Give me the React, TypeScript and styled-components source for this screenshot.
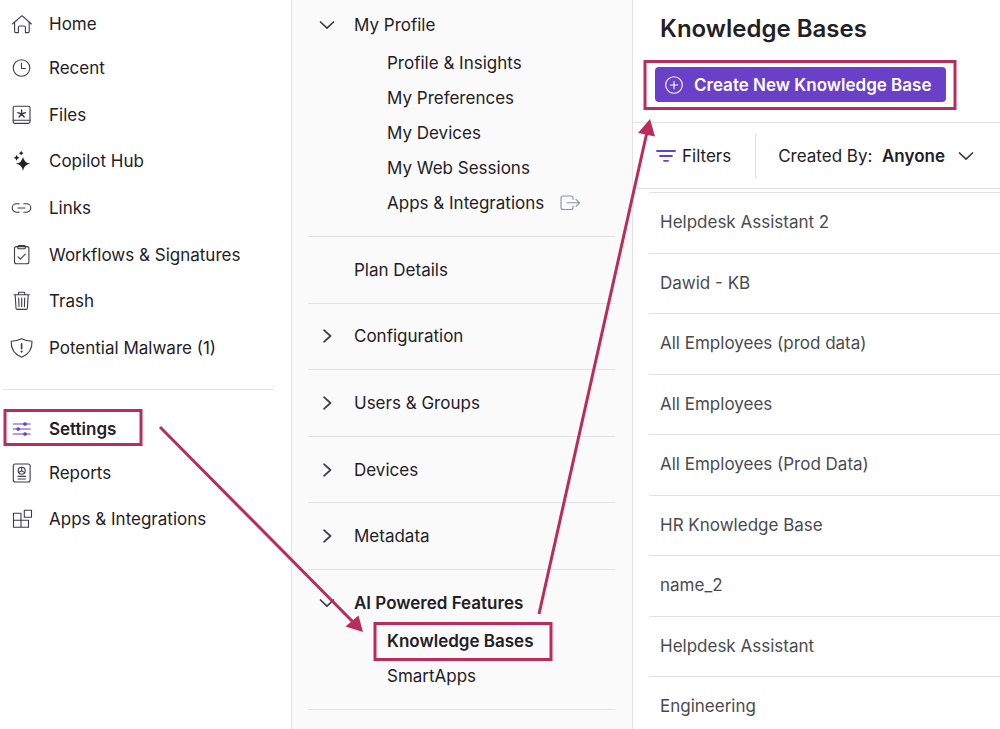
import React from "react";
import styled, { createGlobalStyle } from "styled-components";

const color = {
  ink: "#1f2126",
  soft: "#4a4b4f",
  icon: "#3c3d42",
  muted: "#8b8fa3",
  line: "#e2e2e5",
  panel: "#fafafa",
  violet: "#6b40c8",
  mark: "#b92d5d",
};

const GlobalStyle = createGlobalStyle`
  *, *::before, *::after { box-sizing: border-box; }
  body {
    margin: 0;
    background: #fff;
    color: ${color.ink};
    font: 400 17px/24px Inter, "Liberation Sans", sans-serif;
  }
  ul { list-style: none; margin: 0; padding: 0; }
  a { color: inherit; text-decoration: none; }
  button { font: inherit; color: inherit; border: 0; background: none; padding: 0; cursor: pointer; }
`;

const Page = styled.div`
  position: relative;
  display: grid;
  grid-template-columns: 291px 342px minmax(0, 1fr);
  min-height: 100vh;
  overflow: hidden;
`;

const Sidebar = styled.nav`
  padding: 2px 17px 0 3px;
`;

const MainLinks = styled.ul`
  display: grid;
  grid-template-rows: 43px repeat(7, 1fr);
  min-height: 369px;
`;

const AdminLinks = styled.ul`
  display: grid;
  grid-template-rows: 42px 46px 46px;
`;

const Divider = styled.hr`
  height: 1px;
  margin: 18px 0;
  border: 0;
  background: ${color.line};
`;

const SidebarItem = styled.li`
  display: flex;
  align-items: center;
`;

const SidebarLink = styled.a<{ $active?: boolean }>`
  display: flex;
  align-items: center;
  gap: 15px;
  padding-left: 7px;
  font-weight: ${(p) => (p.$active ? 600 : 400)};
`;

const Icon = styled.svg<{ $color?: string; $weight?: number }>`
  display: block;
  flex: none;
  fill: none;
  color: ${(p) => p.$color ?? color.icon};
  stroke: currentColor;
  stroke-width: ${(p) => p.$weight ?? 1.1};
  stroke-linecap: round;
  stroke-linejoin: round;
`;

const SettingsNav = styled.nav`
  display: flex;
  flex-direction: column;
  padding: 0 17px 19px 16px;
  background: ${color.panel};
  border: solid ${color.line};
  border-width: 0 1px;
`;

const Section = styled.section<{ $open?: boolean; $first?: boolean }>`
  display: flex;
  flex-direction: column;
  justify-content: center;
  flex: ${(p) => (p.$open ? "none" : "1 0 66px")};
  padding: ${(p) => (p.$first ? "7px 0 16px" : p.$open ? "16px 0 15px" : "0")};
  border-bottom: 1px solid ${color.line};
`;

const SectionToggle = styled.button<{ $active?: boolean }>`
  display: grid;
  grid-template-columns: 38px auto;
  align-items: center;
  justify-content: start;
  column-gap: 8px;
  height: 35px;
  text-align: left;
  font-weight: ${(p) => (p.$active ? 600 : 400)};

  svg { justify-self: center; }
`;

const SectionLink = styled.a`
  display: flex;
  align-items: center;
  height: 35px;
  padding-left: 46px;
`;

const SubLinks = styled.ul`
  margin-top: 3px;
  padding-left: 79px;
`;

const SubLink = styled.a<{ $active?: boolean }>`
  display: flex;
  align-items: center;
  gap: 15px;
  height: 35px;
  font-weight: ${(p) => (p.$active ? 600 : 400)};
`;

const Main = styled.main`
  display: flex;
  flex-direction: column;
  min-width: 0;
`;

const Header = styled.header`
  padding: 15px 22px 20px;
  border-bottom: 1px solid ${color.line};
`;

const Title = styled.h1`
  margin: 0 0 24px 5px;
  font-size: 24px;
  line-height: 28px;
  font-weight: 600;
`;

const CreateButton = styled.button`
  display: flex;
  align-items: center;
  gap: 10px;
  height: 35px;
  min-width: 291px;
  padding: 0 9px;
  border-radius: 4px;
  background: ${color.violet};
  color: #fff;
  font-weight: 600;
  white-space: nowrap;
`;

const FilterBar = styled.div`
  display: flex;
  align-items: center;
  height: 66px;
  padding-left: 22px;
  border-bottom: 1px solid ${color.line};
  white-space: nowrap;
`;

const FilterButton = styled.button`
  display: flex;
  align-items: center;
  gap: 6px;
  height: 44px;
  padding-right: 24px;
  border-right: 1px solid ${color.line};
`;

const CreatedBy = styled.button`
  display: flex;
  align-items: center;
  gap: 12px;
  margin-left: 22px;
`;

const Strong = styled.span`
  font-weight: 600;
`;

const BaseList = styled.ul`
  display: flex;
  flex-direction: column;
  flex: 1;
  margin: 3px 0 0 16px;
`;

const BaseItem = styled.li`
  flex: 1 0 60px;
  padding: 17px 11px 0;
  border-top: 1px solid ${color.line};
  color: ${color.soft};

  &:last-child { flex: 0 0 53px; }
`;

const Annotations = styled.svg`
  position: absolute;
  top: 0;
  left: 0;
  pointer-events: none;
`;

const icons = {
  home: (
    <>
      <path d="M2.4 11 12 2.700 21.400 11" />
      <path d="M4.600 9.200v9.400q0 1 1 1h2.800v-5.200q0-1.400 1.400-1.400h4.200q1.400 0 1.400 1.400v5.200h2.800q1 0 1-1V9.200" />
    </>
  ),
  recent: (
    <>
      <circle cx="11.5" cy="11" r="8.300" />
      <path d="M11.500 6v5.500h4" />
    </>
  ),
  files: (
    <>
      <rect x="3.200" y="2.200" width="16.800" height="17.200" rx="1.600" />
      <path d="M3.200 16.200H20" />
      <path
        strokeWidth="1.400"
        d="M11.600 6v4M11.600 10 7.800 8.600M11.600 10l3.800-1.400M11.600 10l-2.600 3M11.600 10l2.600 3"
      />
    </>
  ),
  copilot: (
    <g fill={color.ink} stroke="none">
      <path d="M13 6.800q1 6 7.200 7-6.200 1-7.200 7-1-6-7.200-7 6.200-1 7.200-7z" />
      <path d="M6.600 4.800q.5 2.600 3 3-2.500.4-3 3-.5-2.600-3-3 2.500-.4 3-3z" />
      <path d="M11.200.8q.4 2 2.400 2.400-2 .4-2.400 2.400-.4-2-2.400-2.400 2-.4 2.400-2.400z" />
    </g>
  ),
  links: (
    <path d="M9.200 6.800H6.400a4.200 4.200 0 0 0 0 8.400h2.800M13.800 6.800h2.800a4.200 4.200 0 0 1 0 8.400h-2.800M8 11h7" />
  ),
  workflows: (
    <>
      <rect x="4.500" y="2.600" width="14.400" height="17.200" rx="2" />
      <path d="M7.800 2.600v1.200q0 1 1 1h5.600q1 0 1-1V2.600q0-1-1-1H8.800q-1 0-1 1zM8 12.800l2.400 2.400 4.800-5" />
    </>
  ),
  trash: (
    <path d="M4 4.800h15.400M8.500 4.800V3q0-.8.8-.8h4.600q.8 0 .8.800v1.800M5.200 4.800 6 18.200q.1 1.200 1.200 1.200h9q1.100 0 1.200-1.200l.8-13.400M8.700 8l.3 8.600M11.700 8v8.600M14.700 8l-.3 8.600" />
  ),
  malware: (
    <>
      <path d="M11.600 1.800Q16 4.200 22 4.200q.6 11.400-10.400 16Q.6 15.600 1.200 4.200 7.200 4.200 11.600 1.800z" />
      <path d="M11.600 6.800v5" strokeWidth="1.600" />
      <circle cx="11.600" cy="14.600" r=".5" fill="currentColor" />
    </>
  ),
  settings: (
    <g stroke={color.violet} fill={color.violet}>
      <path d="M3.200 6h17M3.200 11h17M3.200 16h17" />
      <circle cx="15" cy="6" r="1.300" />
      <circle cx="8.200" cy="11" r="1.300" />
      <circle cx="15" cy="16" r="1.300" />
    </g>
  ),
  reports: (
    <>
      <rect x="3.300" y="2" width="16.800" height="18" rx="2" />
      <circle cx="11.700" cy="8.800" r="3.500" />
      <path d="M11.700 5.300v3.500l-3.200 1.600M11.700 8.800l3 1.800M8 14.400h7.400M8 17h7.400" />
    </>
  ),
  apps: (
    <path d="M3.500 5.300h7.500v7H3.500zM3.500 12.300h7.500v7H3.500zM11 12.300h7.500v7H11zM14.300 2.300h7.200v7h-7.200z" />
  ),
};

type IconName = keyof typeof icons;

const NavIcon = ({ name }: { name: IconName }) => (
  <Icon width="24" height="22" viewBox="0 0 24 22" aria-hidden="true">
    {icons[name]}
  </Icon>
);

const Chevron = ({ open }: { open?: boolean }) => (
  <Icon $weight={1.7} width="18" height="18" viewBox="0 0 18 18" aria-hidden="true">
    <path d={open ? "M2.500 6 9 12.200 15.500 6" : "M6 3.200 12.500 9 6 14.800"} />
  </Icon>
);

const mainLinks: [IconName, string][] = [
  ["home", "Home"],
  ["recent", "Recent"],
  ["files", "Files"],
  ["copilot", "Copilot Hub"],
  ["links", "Links"],
  ["workflows", "Workflows & Signatures"],
  ["trash", "Trash"],
  ["malware", "Potential Malware (1)"],
];

const adminLinks: [IconName, string][] = [
  ["settings", "Settings"],
  ["reports", "Reports"],
  ["apps", "Apps & Integrations"],
];

const profileLinks = ["Profile & Insights", "My Preferences", "My Devices", "My Web Sessions"];
const closedSections = ["Configuration", "Users & Groups", "Devices", "Metadata"];

const bases = [
  "Helpdesk Assistant 2",
  "Dawid - KB",
  "All Employees (prod data)",
  "All Employees",
  "All Employees (Prod Data)",
  "HR Knowledge Base",
  "name_2",
  "Helpdesk Assistant",
  "Engineering",
];

const SidebarEntry = ({ icon, label }: { icon: IconName; label: string }) => (
  <SidebarItem>
    <SidebarLink href="#" $active={icon === "settings"}>
      <NavIcon name={icon} />
      {label}
    </SidebarLink>
  </SidebarItem>
);

export default function App() {
  return (
    <Page>
      <GlobalStyle />
      <Sidebar aria-label="Main">
        <MainLinks>
          {mainLinks.map(([icon, label]) => (
            <SidebarEntry key={label} icon={icon} label={label} />
          ))}
        </MainLinks>
        <Divider />
        <AdminLinks>
          {adminLinks.map(([icon, label]) => (
            <SidebarEntry key={label} icon={icon} label={label} />
          ))}
        </AdminLinks>
      </Sidebar>

      <SettingsNav aria-label="Settings">
        <Section $open $first>
          <SectionToggle aria-expanded="true">
            <Chevron open />
            My Profile
          </SectionToggle>
          <SubLinks>
            {profileLinks.map((label) => (
              <li key={label}>
                <SubLink href="#">{label}</SubLink>
              </li>
            ))}
            <li>
              <SubLink href="#">
                Apps &amp; Integrations
                <Icon $color={color.muted} width="22" height="16" viewBox="0 0 22 16" aria-hidden="true">
                  <path d="M14 4.500V3q0-2-2-2H4Q2 1 2 3v9.500q0 2 2 2h8q2 0 2-2V11M8 7.800h12.500M17 4.300l3.500 3.500-3.500 3.500" />
                </Icon>
              </SubLink>
            </li>
          </SubLinks>
        </Section>
        <Section>
          <SectionLink href="#">Plan Details</SectionLink>
        </Section>
        {closedSections.map((label) => (
          <Section key={label}>
            <SectionToggle aria-expanded="false">
              <Chevron />
              {label}
            </SectionToggle>
          </Section>
        ))}
        <Section $open>
          <SectionToggle $active aria-expanded="true">
            <Chevron open />
            AI Powered Features
          </SectionToggle>
          <SubLinks>
            <li>
              <SubLink href="#" $active>
                Knowledge Bases
              </SubLink>
            </li>
            <li>
              <SubLink href="#">SmartApps</SubLink>
            </li>
          </SubLinks>
        </Section>
      </SettingsNav>

      <Main>
        <Header>
          <Title>Knowledge Bases</Title>
          <CreateButton>
            <Icon $color="#fff" width="20" height="20" viewBox="0 0 20 20" aria-hidden="true">
              <circle cx="10" cy="10" r="8.300" />
              <path d="M10 6.300v7.400M6.300 10h7.400" />
            </Icon>
            Create New Knowledge Base
          </CreateButton>
        </Header>
        <FilterBar>
          <FilterButton>
            <Icon $color={color.violet} $weight={1.8} width="21" height="14" viewBox="0 0 21 14" aria-hidden="true">
              <path d="M2 2h18M5 7h12M9 11.800h4" />
            </Icon>
            Filters
          </FilterButton>
          <CreatedBy aria-haspopup="listbox">
            <span>
              Created By:&nbsp; <Strong>Anyone</Strong>
            </span>
            <Chevron open />
          </CreatedBy>
        </FilterBar>
        <BaseList>
          {bases.map((name) => (
            <BaseItem key={name}>{name}</BaseItem>
          ))}
        </BaseList>
      </Main>

      <Annotations width="1000" height="729" viewBox="0 0 1000 729" aria-hidden="true">
        <g fill="none" stroke={color.mark} strokeWidth="3">
          <rect x="5" y="410.500" width="136" height="34" />
          <rect x="375" y="623.500" width="176" height="36" />
          <rect x="645" y="61.500" width="310" height="47" />
          <path d="M160 427 354 623" />
          <path d="M539 614 647 132" />
        </g>
        <g fill={color.mark}>
          <path d="M363 632 345.500 626.500 358.500 615.500z" />
          <path d="M650 119 638 133 655 136.500z" />
        </g>
      </Annotations>
    </Page>
  );
}
